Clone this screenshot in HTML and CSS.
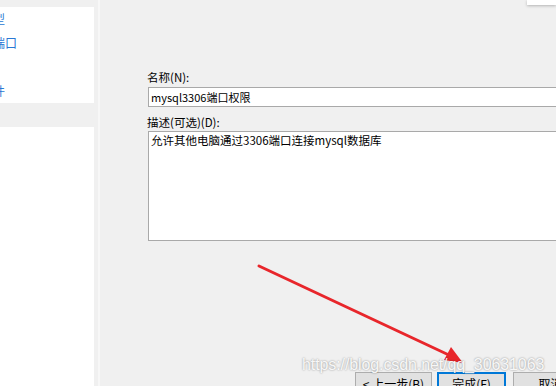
FILE: index.html
```html
<!DOCTYPE html>
<html lang="zh-CN">
<head>
    <meta charset="UTF-8">
    <meta name="viewport" content="width=device-width, initial-scale=1.0">
    <title>新建入站规则向导</title>
    <link rel="stylesheet" href="styles.css">
</head>
<body>
    <div class="wizard">
        <!-- Steps list on the left -->
        <div class="sidebar">
            <ul class="steps">
                <li class="step">规则类型</li>
                <li class="step">协议和端口</li>
                <li class="step">操作</li>
                <li class="step">配置文件</li>
                <li class="step active">名称</li>
            </ul>
        </div>
        <div class="divider"></div>

        <div class="content">
            <div class="topbar">
                <div class="corner"></div>
            </div>

            <div class="form">
                <label class="field-label" for="ruleName">名称(N):</label>
                <input type="text" id="ruleName" class="text-box" value="mysql3306端口权限">

                <label class="field-label desc-label" for="ruleDesc">描述(可选)(D):</label>
                <textarea id="ruleDesc" class="text-area">允许其他电脑通过3306端口连接mysql数据库</textarea>
            </div>

            <div class="buttons">
                <button class="btn btn-back">&lt; 上一步(B)</button>
                <button class="btn btn-finish">完成(F)</button>
                <button class="btn btn-cancel">取消</button>
            </div>
        </div>
    </div>

    <!-- Annotation drawn over the screenshot -->
    <svg class="arrow" width="556" height="386" viewBox="0 0 556 386">
        <line x1="259" y1="266" x2="451" y2="356" stroke="#e8262b" stroke-width="3" stroke-linecap="round"/>
        <polygon points="463,363 444,360 451,347" fill="#e8262b"/>
    </svg>
    <div class="watermark">https://blog.csdn.net/qq_30631063</div>
</body>
</html>
```

FILE: styles.css
```css
/* Windows wizard page */
body {
    margin: 0;
    padding: 0;
    width: 556px;
    height: 386px;
    overflow: hidden;
    position: relative;
    background-color: #f0f0f0;
    font-family: "Noto Sans CJK SC", "Liberation Sans", sans-serif;
    font-size: 12px;
    color: #000;
}
.wizard {
    display: flex;
    height: 386px;
}
.sidebar {
    width: 94px;
    flex-shrink: 0;
    margin-top: 7px;
    background-color: #fff;
    overflow: hidden;
}
.steps {
    list-style: none;
    margin: 0 0 0 -43px;
    padding: 0;
}
.step {
    height: 24px;
    line-height: 24px;
    color: #2a78d4;
    white-space: nowrap;
}
.step.active {
    background-color: #f0f0f0;
}
.divider {
    width: 2px;
    flex-shrink: 0;
    margin-left: 4px;
    background-color: #f7f7f7;
}
.content {
    flex: 1;
    display: flex;
    flex-direction: column;
    min-width: 0;
}
.topbar {
    display: flex;
    justify-content: flex-end;
    height: 5px;
}
.corner {
    width: 29px;
    height: 5px;
    background-color: #fff;
    box-shadow: 0 1px 3px rgba(0, 0, 0, 0.25);
}
.form {
    display: flex;
    flex-direction: column;
    align-items: flex-start;
    padding: 64px 0 0 48px;
}
.field-label {
    line-height: 16px;
    height: 16px;
    margin-left: -1px;
    font-size: 11.5px;
}
.text-box {
    box-sizing: border-box;
    width: 420px;
    height: 20px;
    margin: 2px 0 0 0;
    padding: 0 2px;
    border: 1px solid #a9a9a9;
    background-color: #fff;
    font-family: "Noto Sans CJK SC", sans-serif;
    font-size: 11px;
    color: #000;
    outline: none;
}
.desc-label {
    margin-top: 7px;
}
.text-area {
    box-sizing: border-box;
    width: 420px;
    height: 110px;
    margin: 1px 0 0 0;
    padding: 1px 2px;
    border: 1px solid #a9a9a9;
    background-color: #fff;
    font-family: "Noto Sans CJK SC", sans-serif;
    font-size: 11.5px;
    line-height: 15px;
    color: #000;
    resize: none;
    outline: none;
}
.buttons {
    display: flex;
    margin: 131px 0 0 255px;
}
.btn {
    box-sizing: border-box;
    flex-shrink: 0;
    height: 23px;
    padding: 0;
    border: 1px solid #adadad;
    background-color: #e1e1e1;
    font-family: "Noto Sans CJK SC", sans-serif;
    font-size: 12px;
    color: #000;
}
.btn-back {
    width: 77px;
}
.btn-finish {
    width: 69px;
    margin-left: 5px;
    border: 2px solid #0078d7;
}
.btn-cancel {
    width: 75px;
    margin-left: 7px;
}
.arrow {
    position: absolute;
    left: 0;
    top: 0;
    pointer-events: none;
}
.watermark {
    position: absolute;
    left: 302px;
    top: 355px;
    font-family: "Liberation Sans", sans-serif;
    font-size: 16px;
    letter-spacing: -0.1px;
    line-height: 20px;
    color: rgba(255, 255, 255, 0.92);
    text-shadow: 0 0 2px rgba(0, 0, 0, 0.45);
    white-space: nowrap;
    pointer-events: none;
}
```
